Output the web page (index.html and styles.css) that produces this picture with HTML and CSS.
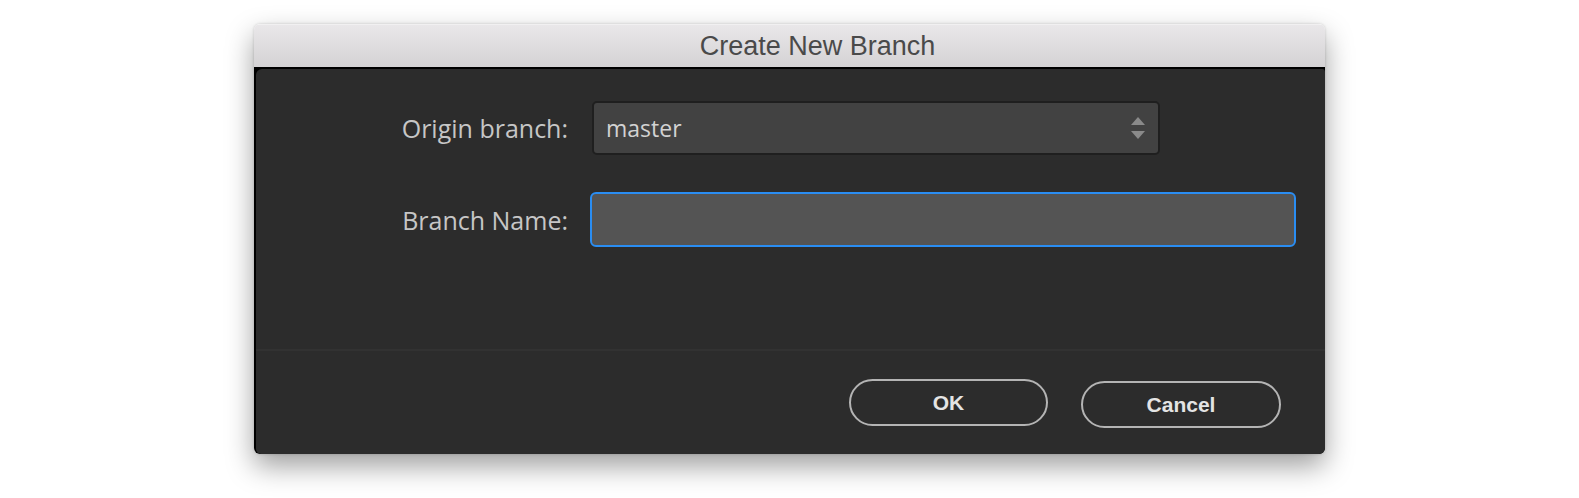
FILE: index.html
```html
<!DOCTYPE html>
<html lang="en">
<head>
    <meta charset="UTF-8">
    <title>Create New Branch</title>
    <link rel="stylesheet" href="styles.css">
</head>
<body>
    <div class="window">
        <!-- Title bar -->
        <div class="titlebar">Create New Branch</div>

        <div class="frame">
            <div class="panel">
                <div class="form">
                    <label class="field-label">Origin branch:</label>
                    <div class="select">
                        <span class="select-value">master</span>
                        <svg class="select-arrows" width="14" height="22" viewBox="0 0 14 22">
                            <path d="M7 0 L14 8 L0 8 Z" fill="#8a8a8a"/>
                            <path d="M0 14 L14 14 L7 22 Z" fill="#8a8a8a"/>
                        </svg>
                    </div>

                    <label class="field-label">Branch Name:</label>
                    <div class="input"></div>
                </div>

                <div class="footer">
                    <button class="btn">OK</button>
                    <button class="btn btn-cancel">Cancel</button>
                </div>
            </div>
        </div>
    </div>
</body>
</html>
```

FILE: styles.css
```css
html {
    background-color: #fff;
}
body {
    margin: 0;
    padding: 24px 0 0;
    min-height: 100vh;
    box-sizing: border-box;
    font-family: "Open Sans", "Noto Sans", sans-serif;
}
.window {
    width: 1071px;
    margin: 0 auto;
    border-radius: 6px;
    overflow: hidden;
    box-shadow: 0 12px 28px rgba(0, 0, 0, 0.38), 0 0 3px rgba(0, 0, 0, 0.18);
}
.titlebar {
    height: 43px;
    box-sizing: border-box;
    padding-left: 56px;
    border-top: 1px solid #f1f0f1;
    background: linear-gradient(#e9e7e9, #d4d2d4);
    font-family: "Liberation Sans", Arial, sans-serif;
    font-size: 27px;
    line-height: 43px;
    color: #4a4a4a;
    text-align: center;
}
.frame {
    background-color: #000;
    padding: 2px 0 0 2px;
}
.panel {
    background-color: #2c2c2c;
    border-radius: 6px 3px 0 5px;
}
.form {
    height: 282px;
    box-sizing: border-box;
    display: grid;
    grid-template-columns: 312px 1fr;
    grid-auto-rows: min-content;
    column-gap: 22px;
    row-gap: 37px;
    padding: 32px 29px 0 0;
    align-items: center;
    border-bottom: 2px solid #323232;
}
.field-label {
    text-align: right;
    font-size: 25px;
    color: #c6c6c6;
}
.select {
    width: 568px;
    height: 54px;
    margin-left: 2px;
    box-sizing: border-box;
    display: flex;
    align-items: center;
    justify-content: space-between;
    padding: 0 13px 0 12px;
    background-color: #424242;
    border: 2px solid #1f1f1f;
    border-radius: 5px;
}
.select-value {
    font-size: 23px;
    color: #d2d2d2;
}
.input {
    height: 55px;
    box-sizing: border-box;
    background-color: #545454;
    border: 2px solid #2a8df2;
    border-radius: 6px;
}
.footer {
    display: flex;
    justify-content: flex-end;
    align-items: flex-start;
    gap: 33px;
    height: 103px;
    box-sizing: border-box;
    padding: 28px 44px 0 0;
}
.btn {
    width: 199px;
    height: 47px;
    background: transparent;
    border: 2px solid #b4b4b4;
    border-radius: 24px;
    font-family: "Liberation Sans", Arial, sans-serif;
    font-weight: bold;
    font-size: 21px;
    color: #e4e4e4;
    cursor: pointer;
}
.btn-cancel {
    width: 200px;
    margin-top: 2px;
}
```
